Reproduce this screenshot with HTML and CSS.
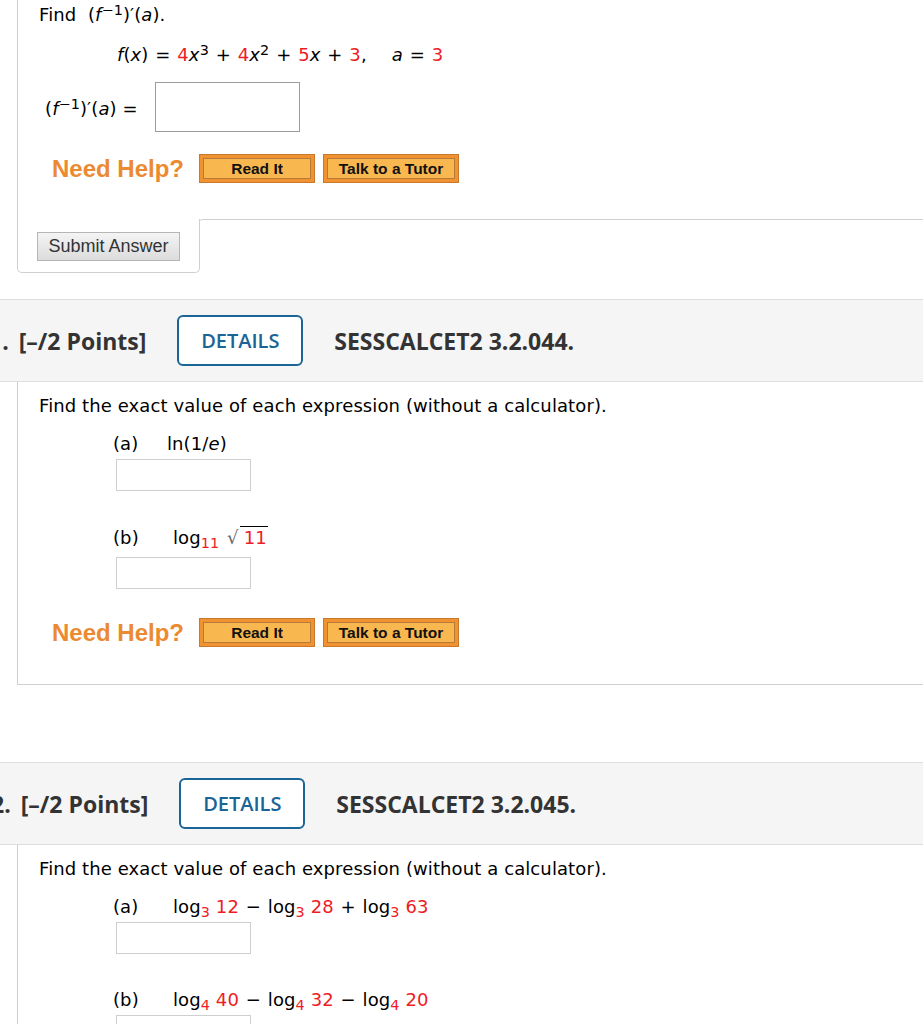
FILE: index.html
```html
<!DOCTYPE html>
<html>

<head>
	<meta charset="utf-8">
	<title>Assignment</title>
	<meta name="viewport" content="width=device-width, initial-scale=1.0">
	<link rel="stylesheet" href="styles.css">
</head>

<body>
	<!-- question 1 (scrolled partly out of view) -->
	<div class="q-body q-first">
		<p class="line">Find&nbsp; (<i>f</i><sup>&minus;1</sup>)&prime;(<i>a</i>).</p>
		<p class="line eq">
			<i>f</i>(<i>x</i>) <span class="op">=</span> <span class="num">4</span><i>x</i><sup>3</sup> <span class="op">+</span> <span class="num">4</span><i>x</i><sup>2</sup> <span class="op">+</span> <span class="num">5</span><i>x</i> <span class="op">+</span> <span class="num">3</span>,<span class="wide-gap"></span><i>a</i> <span class="op">=</span> <span class="num">3</span>
		</p>
		<div class="answer-row">
			<span>(<i>f</i><sup>&minus;1</sup>)&prime;(<i>a</i>) =</span>
			<input type="text" class="ans big">
		</div>
		<div class="help">
			<span class="help-label">Need Help?</span>
			<button class="help-btn read">Read It</button>
			<button class="help-btn tutor">Talk to a Tutor</button>
		</div>
	</div>
	<div class="submit-row">
		<div class="submit-tab"><button class="submit">Submit Answer</button></div>
		<div class="submit-rest"></div>
	</div>

	<!-- question 2 -->
	<div class="q-head">
		<span class="qnum">1.</span>
		<span class="points">[&ndash;/2 Points]</span>
		<button class="details">DETAILS</button>
		<span class="code">SESSCALCET2 3.2.044.</span>
	</div>
	<div class="q-body">
		<p class="line">Find the exact value of each expression (without a calculator).</p>
		<div class="part">
			<div class="line"><span class="plabel">(a)</span><span class="expr tight">ln(1/<i>e</i>)</span></div>
			<input type="text" class="ans">
		</div>
		<div class="part radical-part">
			<div class="line"><span class="plabel">(b)</span><span class="expr">log<sub class="num">11</sub> <span class="root">&radic;</span><span class="radicand num">11</span></span></div>
			<input type="text" class="ans">
		</div>
		<div class="help">
			<span class="help-label">Need Help?</span>
			<button class="help-btn read">Read It</button>
			<button class="help-btn tutor">Talk to a Tutor</button>
		</div>
	</div>

	<!-- question 3 -->
	<div class="q-head q-head-last">
		<span class="qnum">2.</span>
		<span class="points">[&ndash;/2 Points]</span>
		<button class="details">DETAILS</button>
		<span class="code">SESSCALCET2 3.2.045.</span>
	</div>
	<div class="q-body">
		<p class="line">Find the exact value of each expression (without a calculator).</p>
		<div class="part">
			<div class="line"><span class="plabel">(a)</span><span class="expr">log<sub class="num">3</sub> <span class="num">12</span> <span class="op">&minus;</span> log<sub class="num">3</sub> <span class="num">28</span> <span class="op">+</span> log<sub class="num">3</sub> <span class="num">63</span></span></div>
			<input type="text" class="ans">
		</div>
		<div class="part">
			<div class="line"><span class="plabel">(b)</span><span class="expr">log<sub class="num">4</sub> <span class="num">40</span> <span class="op">&minus;</span> log<sub class="num">4</sub> <span class="num">32</span> <span class="op">&minus;</span> log<sub class="num">4</sub> <span class="num">20</span></span></div>
			<input type="text" class="ans">
		</div>
	</div>
</body>

</html>
```

FILE: styles.css
```css
:root {
	--line: #cfcfcf;
	--red: #ee1c25;
	--orange: #eb8a31;
	--blue: #1b6496;
	--head-bg: #f5f5f5;
}

body {
	margin: 0;
	background: #fff;
	color: #000;
	font: 18px/20px 'DejaVu Sans', Verdana, sans-serif;
	letter-spacing: 0.1px;
	overflow-x: hidden;
}

p {
	margin: 0;
}

sup,
sub {
	font-size: 0.8em;
	line-height: 0;
}

sup {
	vertical-align: 0.45em;
}

sub {
	vertical-align: -0.3em;
}

.num {
	color: var(--red);
}

.op {
	margin: 0 1px;
}

.line {
	height: 20px;
}

/* question body */
.q-body {
	margin-left: 17px;
	border-left: 1px solid var(--line);
	border-bottom: 1px solid var(--line);
	padding: 14px 0 37px 21px;
}

.q-first {
	padding-top: 5px;
	padding-bottom: 36px;
	border-bottom: none;
}

.eq {
	margin: 20px 0 0 78px;
}

.wide-gap {
	display: inline-block;
	width: 25px;
}

.answer-row {
	display: flex;
	align-items: center;
	gap: 17px;
	margin: 17px 0 0 6px;
}

.answer-row span {
	padding-top: 3px;
}

input.ans {
	display: block;
	box-sizing: border-box;
	width: 135px;
	height: 32px;
	margin: 5px 0 0 3px;
	border: 1px solid #cfcfcf;
	background: #fff;
}

input.ans.big {
	width: 145px;
	height: 50px;
	margin: 0;
	border: 1px solid #9c9c9c;
}

/* sub-parts */
.part {
	margin: 18px 0 0 74px;
}

.part + .part {
	margin-top: 36px;
}

.part.radical-part {
	margin-top: 37px;
}

.radical-part input.ans {
	margin-top: 9px;
}

.plabel {
	display: inline-block;
	width: 60px;
}

.expr.tight {
	margin-left: -6px;
}

.root {
	margin-left: 2px;
	color: #666;
}

.radicand {
	border-top: 1px solid #000;
	padding: 0 1px 0 4px;
	margin-left: 1px;
}

/* need help */
.help {
	display: flex;
	align-items: center;
	margin: 22px 0 0 13px;
	letter-spacing: 0;
}

.q-body .part + .help {
	margin-top: 29px;
}

.help-label {
	color: var(--orange);
	font: bold 24px 'Liberation Sans', Arial, sans-serif;
	margin-right: 15px;
}

.help-btn {
	height: 29px;
	padding: 0;
	border: 1px solid #c9792e;
	background: #f9b84f;
	box-shadow: inset 0 0 0 3px #f0922f, inset 0 0 0 4px #b9793a;
	color: #111;
	font: bold 15.5px 'Liberation Sans', Arial, sans-serif;
	cursor: pointer;
}

.help-btn.read {
	width: 116px;
	margin-right: 8px;
}

.help-btn.tutor {
	width: 136px;
}

/* submit tab */
.submit-row {
	display: flex;
}

.submit-tab {
	margin-left: 17px;
	width: 162px;
	padding: 13px 0 11px 19px;
	border: 1px solid var(--line);
	border-top: none;
	border-radius: 0 0 5px 5px;
}

.submit-rest {
	flex: 1;
	border-top: 1px solid var(--line);
	border-top-left-radius: 4px;
	margin-left: -1px;
}

.submit {
	display: block;
	width: 143px;
	height: 29px;
	padding: 0;
	border: 1px solid #b5b5b5;
	background: linear-gradient(#f4f4f4, #dcdcdc);
	color: #333;
	font: 18px 'Liberation Sans', Arial, sans-serif;
	letter-spacing: 0;
}

/* question header */
.q-head {
	display: flex;
	align-items: center;
	margin-top: 26px;
	padding: 15px 0;
	background: var(--head-bg);
	border-top: 1px solid #dedede;
	border-bottom: 1px solid #dedede;
	color: #333;
	font: bold 23px 'Open Sans', sans-serif;
	letter-spacing: 0;
	white-space: nowrap;
}

.q-head-last {
	margin-top: 77px;
}

.qnum {
	margin-left: -11px;
	margin-right: 10px;
}

.q-head-last .qnum {
	margin-left: -9px;
}

.details {
	box-sizing: border-box;
	width: 126px;
	height: 51px;
	margin: 0 31px;
	border: 2px solid var(--blue);
	border-radius: 6px;
	background: #fff;
	color: var(--blue);
	font: 600 20px 'Open Sans', sans-serif;
	cursor: pointer;
}
```
